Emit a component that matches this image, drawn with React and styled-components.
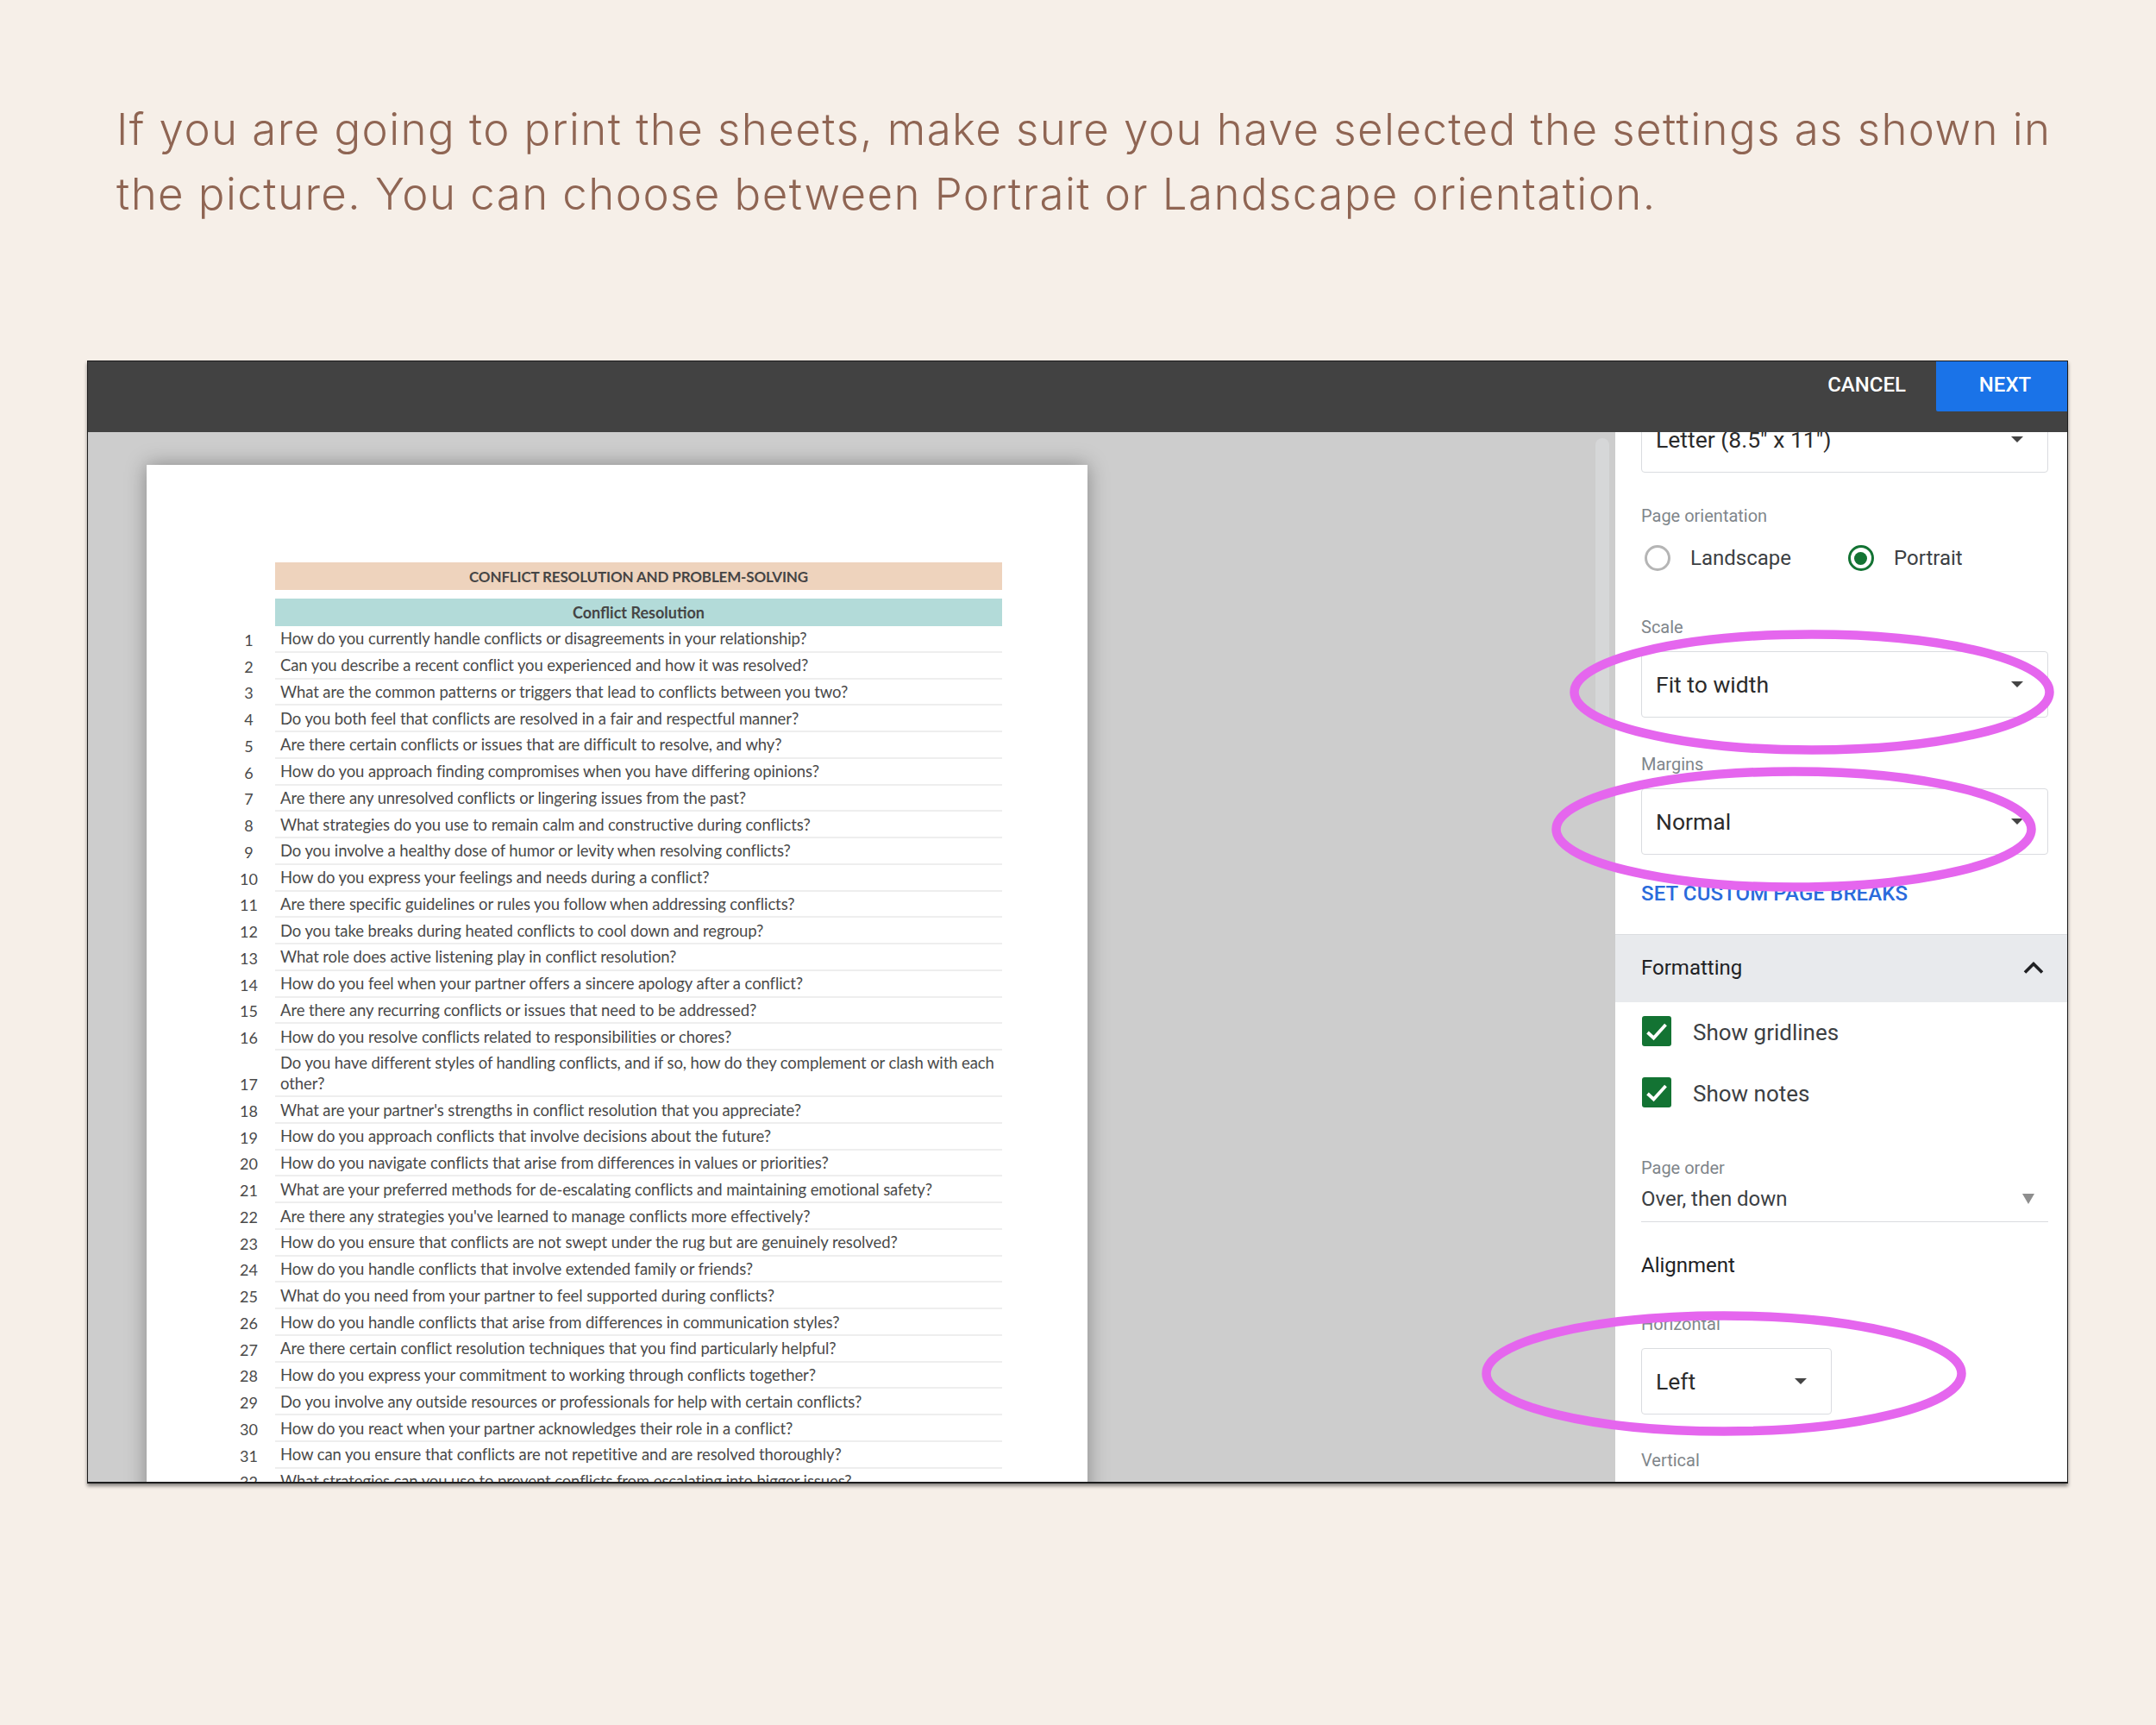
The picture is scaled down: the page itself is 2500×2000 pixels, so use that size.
import React from 'react';
import styled, { createGlobalStyle } from 'styled-components';

const questions = [
  'How do you currently handle conflicts or disagreements in your relationship?',
  'Can you describe a recent conflict you experienced and how it was resolved?',
  'What are the common patterns or triggers that lead to conflicts between you two?',
  'Do you both feel that conflicts are resolved in a fair and respectful manner?',
  'Are there certain conflicts or issues that are difficult to resolve, and why?',
  'How do you approach finding compromises when you have differing opinions?',
  'Are there any unresolved conflicts or lingering issues from the past?',
  'What strategies do you use to remain calm and constructive during conflicts?',
  'Do you involve a healthy dose of humor or levity when resolving conflicts?',
  'How do you express your feelings and needs during a conflict?',
  'Are there specific guidelines or rules you follow when addressing conflicts?',
  'Do you take breaks during heated conflicts to cool down and regroup?',
  'What role does active listening play in conflict resolution?',
  'How do you feel when your partner offers a sincere apology after a conflict?',
  'Are there any recurring conflicts or issues that need to be addressed?',
  'How do you resolve conflicts related to responsibilities or chores?',
  'Do you have different styles of handling conflicts, and if so, how do they complement or clash with each other?',
  "What are your partner's strengths in conflict resolution that you appreciate?",
  'How do you approach conflicts that involve decisions about the future?',
  'How do you navigate conflicts that arise from differences in values or priorities?',
  'What are your preferred methods for de-escalating conflicts and maintaining emotional safety?',
  "Are there any strategies you've learned to manage conflicts more effectively?",
  'How do you ensure that conflicts are not swept under the rug but are genuinely resolved?',
  'How do you handle conflicts that involve extended family or friends?',
  'What do you need from your partner to feel supported during conflicts?',
  'How do you handle conflicts that arise from differences in communication styles?',
  'Are there certain conflict resolution techniques that you find particularly helpful?',
  'How do you express your commitment to working through conflicts together?',
  'Do you involve any outside resources or professionals for help with certain conflicts?',
  'How do you react when your partner acknowledges their role in a conflict?',
  'How can you ensure that conflicts are not repetitive and are resolved thoroughly?',
  'What strategies can you use to prevent conflicts from escalating into bigger issues?',
];

const GlobalStyle = createGlobalStyle`
  body {
    margin: 0;
    background: #f6efe8;
    font-family: Roboto, "Liberation Sans", sans-serif;
  }
`;

const Screen = styled.div`
  width: 2500px;
  height: 2000px;
  padding-top: 112px;
  box-sizing: border-box;
`;

const Intro = styled.h1`
  margin: 0 0 0 135px;
  font-family: Inter, "Open Sans", sans-serif;
  font-size: 51px;
  font-weight: 300;
  letter-spacing: 1.43px;
  line-height: 75px;
  white-space: nowrap;
  color: #8f6553;
`;

const IntroLine = styled.div`
  display: block;
`;

const Window = styled.div`
  position: relative;
  width: 2297px;
  height: 1302px;
  margin: 156px 0 0 101px;
  box-sizing: border-box;
  border: 1px solid #1c1c1c;
  border-bottom-width: 2px;
  box-shadow: 0 3px 4px rgba(0, 0, 0, 0.45);
  overflow: hidden;
  display: flex;
  flex-direction: column;
`;

const TopBar = styled.div`
  height: 82px;
  flex: none;
  background: #424242;
  display: flex;
  justify-content: flex-end;
  align-items: flex-start;
`;

const Cancel = styled.button`
  height: 58px;
  margin-right: 35px;
  padding: 0 0 4px;
  border: 0;
  background: none;
  color: #fff;
  font: 500 24px Roboto, sans-serif;
`;

const Next = styled.button`
  width: 152px;
  height: 58px;
  padding: 0 0 4px 8px;
  border: 0;
  border-bottom-left-radius: 2px;
  background: #1a73e8;
  color: #fff;
  font: 500 24px Roboto, sans-serif;
`;

const Body = styled.div`
  flex: 1;
  min-height: 0;
  display: flex;
`;

const Preview = styled.div`
  flex: 1;
  min-width: 0;
  background: #cdcdcd;
  padding: 38px 0 0 68px;
  display: flex;
  align-items: flex-start;
`;

const Sheet = styled.div`
  width: 1091px;
  height: 1600px;
  flex: none;
  box-sizing: border-box;
  padding: 113px 0 0 90px;
  background: #fff;
  box-shadow: 0 0 22px rgba(0, 0, 0, 0.34);
  font-family: Lato, sans-serif;
  color: #4a4a4a;
`;

const SheetGrid = styled.div`
  display: grid;
  grid-template-columns: 59px 843px;
`;

const Band = styled.div`
  grid-column: 2;
  height: 32px;
  margin-bottom: ${p => p.$gap}px;
  background: ${p => p.$color};
  display: flex;
  align-items: center;
  justify-content: center;
  font-size: ${p => p.$size}px;
  font-weight: 700;
  letter-spacing: ${p => p.$spacing}px;
  color: #454545;
`;

const RowNumber = styled.div`
  display: flex;
  align-items: flex-end;
  justify-content: center;
  padding: 0 2px 4px 0;
  font-size: 18px;
  line-height: 22px;
`;

const Question = styled.div`
  min-height: 30.75px;
  padding: 3.4px 2px 1.85px 6px;
  box-sizing: border-box;
  border-bottom: 2px solid #eeeeee;
  font-size: 18.5px;
  letter-spacing: -0.1px;
  line-height: 23.5px;
`;

const Thumb = styled.div`
  width: 16px;
  height: 332px;
  flex: none;
  margin: -31px 7px 0 auto;
  border-radius: 8px;
  background: #d6d7d8;
`;

const Panel = styled.div`
  width: 524px;
  flex: none;
  overflow: hidden;
  background: #fff;
  color: #3c4043;
`;

const Section = styled.div`
  padding: 0 22px 0 30px;
`;

const FieldLabel = styled.div`
  margin-top: ${p => p.$top}px;
  font-size: 20px;
  line-height: 24px;
  color: #80868b;
`;

const Select = styled.div`
  width: ${p => p.$width || '100%'};
  height: 77px;
  margin-top: ${p => p.$top}px;
  padding: 0 28px 0 16px;
  box-sizing: border-box;
  border: 1px solid #dadce0;
  border-radius: 4px;
  display: flex;
  align-items: center;
  justify-content: space-between;
  font-size: 26.5px;
  color: #2b2b2b;
`;

const Caret = styled.span`
  width: 0;
  height: 0;
  border-left: 7px solid transparent;
  border-right: 7px solid transparent;
  border-top: ${p => p.$height || 7}px solid ${p => p.$color || '#444'};
`;

const RadioRow = styled.div`
  display: flex;
  align-items: center;
  height: 30px;
  margin: 22px 0 0 4px;
`;

const Radio = styled.span`
  width: 30px;
  height: 30px;
  flex: none;
  box-sizing: border-box;
  border-radius: 50%;
  border: 3px solid ${p => (p.$on ? '#137333' : '#b5b5b5')};
  display: flex;
  align-items: center;
  justify-content: center;
  &::after {
    content: '';
    width: 15px;
    height: 15px;
    border-radius: 50%;
    background: ${p => (p.$on ? '#137333' : 'transparent')};
  }
`;

const RadioLabel = styled.span`
  margin: 0 ${p => p.$after}px 0 23px;
  font-size: 24px;
`;

const SetLink = styled.a`
  display: block;
  margin-top: 31px;
  font-size: 24px;
  font-weight: 500;
  letter-spacing: 0.12px;
  line-height: 28px;
  color: #2a6bdc;
`;

const Accordion = styled.div`
  height: 79px;
  margin-top: 33px;
  padding: 0 27px 3px 30px;
  border-top: 1px solid #dadce0;
  box-sizing: border-box;
  background: #e8eaed;
  display: flex;
  align-items: center;
  justify-content: space-between;
  font-size: 24px;
  color: #202124;
`;

const CheckRow = styled.div`
  display: flex;
  align-items: center;
  height: 35px;
  margin-top: ${p => p.$top}px;
  padding-left: 1px;
`;

const CheckBox = styled.span`
  width: 34px;
  height: 35px;
  flex: none;
  margin-right: 25px;
  border-radius: 3px;
  background: #137333;
  display: flex;
  align-items: center;
  justify-content: center;
`;

const CheckLabel = styled.span`
  margin-top: 2px;
  font-size: 26px;
`;

const Plain = styled.div`
  padding-bottom: 10px;
  border-bottom: 1px solid #dadce0;
  margin-top: 8px;
  padding-right: 16px;
  display: flex;
  align-items: center;
  justify-content: space-between;
  font-size: 24px;
  line-height: 32px;
`;

const SubHead = styled.div`
  margin-top: 35px;
  font-size: 24px;
  line-height: 30px;
  color: #202124;
`;

const Ring = styled.svg`
  position: absolute;
  left: ${p => p.$left}px;
  top: ${p => p.$top}px;
  width: 562px;
  height: 145px;
  pointer-events: none;
`;

const Mark = ({ left, top }) => (
  <Ring $left={left} $top={top} viewBox="0 0 562 145">
    <ellipse cx="281" cy="72.5" rx="275.5" ry="67" fill="none" stroke="#e566ee" strokeWidth="10.5" />
  </Ring>
);

const Tick = () => (
  <svg width="26" height="22" viewBox="0 0 26 22">
    <path d="M2.5 12 L9.5 18.5 L23.5 3" fill="none" stroke="#fff" strokeWidth="3.8" />
  </svg>
);

const Chevron = () => (
  <svg width="24" height="16" viewBox="0 0 24 16">
    <path d="M2 13.5 L12 3.5 L22 13.5" fill="none" stroke="#202124" strokeWidth="3.6" />
  </svg>
);

export default function App() {
  return (
    <Screen>
      <GlobalStyle />
      <Intro>
        <IntroLine>If you are going to print the sheets, make sure you have selected the settings as shown in</IntroLine>
        <IntroLine>the picture. You can choose between Portrait or Landscape orientation.</IntroLine>
      </Intro>
      <Window>
        <TopBar>
          <Cancel>CANCEL</Cancel>
          <Next>NEXT</Next>
        </TopBar>
        <Body>
          <Preview>
            <Sheet>
              <SheetGrid>
                <Band $color="#eed3bd" $gap={10} $size={17} $spacing={-0.15}>CONFLICT RESOLUTION AND PROBLEM-SOLVING</Band>
                <Band $color="#b3dbd9" $gap={0} $size={18} $spacing={0}>Conflict Resolution</Band>
                {questions.map((q, i) => (
                  <React.Fragment key={q}>
                    <RowNumber>{i + 1}</RowNumber>
                    <Question>{q}</Question>
                  </React.Fragment>
                ))}
              </SheetGrid>
            </Sheet>
            <Thumb />
          </Preview>
          <Panel>
            <Section>
              <Select $top={-30}>Letter (8.5" x 11")<Caret /></Select>
              <FieldLabel $top={38}>Page orientation</FieldLabel>
              <RadioRow>
                <Radio />
                <RadioLabel $after={66}>Landscape</RadioLabel>
                <Radio $on />
                <RadioLabel $after={0}>Portrait</RadioLabel>
              </RadioRow>
              <FieldLabel $top={53}>Scale</FieldLabel>
              <Select $top={16}>Fit to width<Caret /></Select>
              <FieldLabel $top={42}>Margins</FieldLabel>
              <Select $top={16}>Normal<Caret /></Select>
              <SetLink>SET CUSTOM PAGE BREAKS</SetLink>
            </Section>
            <Accordion>Formatting<Chevron /></Accordion>
            <Section>
              <CheckRow $top={16}><CheckBox><Tick /></CheckBox><CheckLabel>Show gridlines</CheckLabel></CheckRow>
              <CheckRow $top={36}><CheckBox><Tick /></CheckBox><CheckLabel>Show notes</CheckLabel></CheckRow>
              <FieldLabel $top={58}>Page order</FieldLabel>
              <Plain>Over, then down<Caret $color="#8e8e8e" $height={12} /></Plain>
              <SubHead>Alignment</SubHead>
              <FieldLabel $top={41}>Horizontal</FieldLabel>
              <Select $top={16} $width="221px">Left<Caret /></Select>
              <FieldLabel $top={41}>Vertical</FieldLabel>
            </Section>
          </Panel>
        </Body>
        <Mark left={1718} top={311} />
        <Mark left={1697} top={470} />
        <Mark left={1616} top={1101} />
      </Window>
    </Screen>
  );
}
